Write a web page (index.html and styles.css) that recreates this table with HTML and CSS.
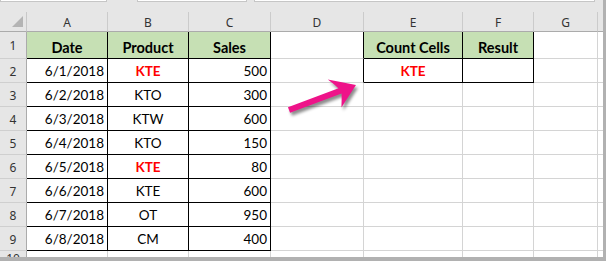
FILE: index.html
```html
<!doctype html>
<html>
  <head>
    <title>Count Cells</title>
    <link rel="stylesheet" href="styles.css">
  </head>
  <body>
    <div class="app">
      <div class="toolbar">
        <span class="field name-box"></span>
        <span class="field fx-box"></span>
        <span class="field formula-box"></span>
      </div>

      <div class="sheet">
        <div class="corner"><span class="select-all"></span></div>
        <div class="colhead">A</div>
        <div class="colhead">B</div>
        <div class="colhead">C</div>
        <div class="colhead">D</div>
        <div class="colhead">E</div>
        <div class="colhead">F</div>
        <div class="colhead">G</div>
        <div class="colhead last"></div>

        <div class="rowhead">1</div>
        <div class="cell head b">Date</div>
        <div class="cell head b">Product</div>
        <div class="cell head b">Sales</div>
        <div class="cell br"></div>
        <div class="cell head b">Count Cells</div>
        <div class="cell head b">Result</div>
        <div class="cell"></div>
        <div class="cell last"></div>

        <div class="rowhead">2</div>
        <div class="cell num b">6/1/2018</div>
        <div class="cell mid b red">KTE</div>
        <div class="cell num b">500</div>
        <div class="cell br"></div>
        <div class="cell mid b red">KTE</div>
        <div class="cell b"></div>
        <div class="cell"></div>
        <div class="cell last"></div>

        <div class="rowhead">3</div>
        <div class="cell num b">6/2/2018</div>
        <div class="cell mid b">KTO</div>
        <div class="cell num b">300</div>
        <div class="cell"></div>
        <div class="cell"></div>
        <div class="cell"></div>
        <div class="cell"></div>
        <div class="cell last"></div>

        <div class="rowhead">4</div>
        <div class="cell num b">6/3/2018</div>
        <div class="cell mid b">KTW</div>
        <div class="cell num b">600</div>
        <div class="cell"></div>
        <div class="cell"></div>
        <div class="cell"></div>
        <div class="cell"></div>
        <div class="cell last"></div>

        <div class="rowhead">5</div>
        <div class="cell num b">6/4/2018</div>
        <div class="cell mid b">KTO</div>
        <div class="cell num b">150</div>
        <div class="cell"></div>
        <div class="cell"></div>
        <div class="cell"></div>
        <div class="cell"></div>
        <div class="cell last"></div>

        <div class="rowhead">6</div>
        <div class="cell num b">6/5/2018</div>
        <div class="cell mid b red">KTE</div>
        <div class="cell num b">80</div>
        <div class="cell"></div>
        <div class="cell"></div>
        <div class="cell"></div>
        <div class="cell"></div>
        <div class="cell last"></div>

        <div class="rowhead">7</div>
        <div class="cell num b">6/6/2018</div>
        <div class="cell mid b">KTE</div>
        <div class="cell num b">600</div>
        <div class="cell"></div>
        <div class="cell"></div>
        <div class="cell"></div>
        <div class="cell"></div>
        <div class="cell last"></div>

        <div class="rowhead">8</div>
        <div class="cell num b">6/7/2018</div>
        <div class="cell mid b">OT</div>
        <div class="cell num b">950</div>
        <div class="cell"></div>
        <div class="cell"></div>
        <div class="cell"></div>
        <div class="cell"></div>
        <div class="cell last"></div>

        <div class="rowhead">9</div>
        <div class="cell num b">6/8/2018</div>
        <div class="cell mid b">CM</div>
        <div class="cell num b">400</div>
        <div class="cell"></div>
        <div class="cell"></div>
        <div class="cell"></div>
        <div class="cell"></div>
        <div class="cell last"></div>

        <!-- row 10 is cut off by the window -->
        <div class="rowhead cut">10</div>
        <div class="cell cut"></div>
        <div class="cell cut"></div>
        <div class="cell cut"></div>
        <div class="cell cut"></div>
        <div class="cell cut"></div>
        <div class="cell cut"></div>
        <div class="cell cut"></div>
        <div class="cell cut last"></div>
      </div>

      <svg class="arrow" width="606" height="261" viewBox="0 0 606 261">
        <g transform="translate(289 110) rotate(-20.5)">
          <path d="M0,-3 L54,-3 Q51,-9 47,-15 L71.5,0 L50,16 Q53,9 55,3 L0,3 Z" fill="#ee1389"/>
        </g>
      </svg>
    </div>
  </body>
</html>
```

FILE: styles.css
```css
body {
    margin: 0;
    background: #fff;
}

.app {
    position: relative;
    width: 606px;
    height: 261px;
    overflow: hidden;
    box-sizing: border-box;
    border-right: 3px solid #b1b1b1;
    border-bottom: 4px solid #b1b1b1;
    font-family: Lato, "Liberation Sans", sans-serif;
}

/* formula bar strip above the column letters */
.toolbar {
    display: flex;
    height: 12px;
    background: #e6e6e6;
}

.field {
    display: block;
    height: 1px;
    background: #fff;
    border: 1px solid #c6c6c6;
    border-top: none;
}

.name-box {
    width: 105px;
}

.fx-box {
    width: 108px;
    margin-left: 30px;
}

.formula-box {
    flex: 1;
    margin-left: 7px;
    margin-right: 8px;
}

.sheet {
    display: grid;
    grid-template-columns: 27px 81px 81px 82px 93px 99px 71px 64px 5px;
    grid-template-rows: 20px 27px repeat(8, 24px) 6px;
}

.sheet > div {
    box-sizing: border-box;
    overflow: hidden;
    white-space: nowrap;
}

.corner {
    position: relative;
    background: #e6e6e6;
    border-right: 1px solid #c8c8c8;
    border-bottom: 1px solid #ababab;
}

.select-all {
    position: absolute;
    left: 12px;
    top: 4px;
    width: 0;
    height: 0;
    border-left: 11px solid transparent;
    border-bottom: 11px solid #b4b4b4;
}

.colhead,
.rowhead {
    display: flex;
    align-items: center;
    justify-content: center;
    background: #e6e6e6;
    font-family: "Noto Sans", "Open Sans", sans-serif;
    font-size: 12px;
    color: #333;
}

.colhead {
    border-right: 1px solid #cbcbcb;
    border-bottom: 1px solid #ababab;
    padding-top: 1px;
}

.colhead.last {
    border-right: none;
}

.rowhead {
    border-right: 1px solid #ababab;
    border-bottom: 1px solid #cfcfcf;
    padding-top: 1px;
}

.rowhead.cut {
    align-items: flex-start;
    padding-top: 2px;
    line-height: 12px;
    border-bottom: none;
}

.cell {
    display: flex;
    align-items: flex-end;
    padding: 0 3px 3px;
    line-height: 16px;
    font-size: 13.5px;
    color: #000;
    border-right: 1px solid #d4d4d4;
    border-bottom: 1px solid #d4d4d4;
}

.cell.last {
    border-right: none;
}

.cell.cut {
    border-bottom: none;
}

.cell.b {
    border-right-color: #000;
    border-bottom-color: #000;
}

.cell.br {
    border-right-color: #000;
}

.head {
    justify-content: center;
    background: #c6e0b4;
    font-weight: bold;
    font-size: 14.5px;
    padding-bottom: 2px;
}

.num {
    justify-content: flex-end;
}

.mid {
    justify-content: center;
}

.red {
    color: #f00;
    font-weight: bold;
}

.arrow {
    position: absolute;
    left: 0;
    top: 0;
    pointer-events: none;
    filter: drop-shadow(2px 3px 1.5px rgba(0, 0, 0, 0.45));
}
```
